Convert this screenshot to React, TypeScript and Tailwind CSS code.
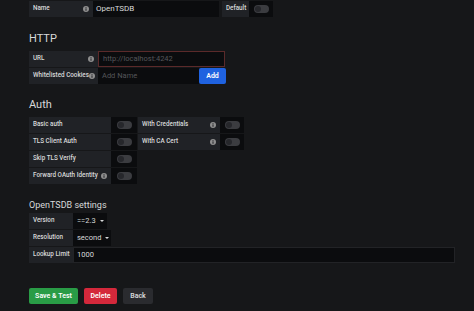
import React from 'react'

function Info() {
  return (
    <svg width="6" height="6" viewBox="0 0 12 12" className="shrink-0">
      <circle cx="6" cy="6" r="6" fill="#8e8e8e" />
      <rect x="5" y="5" width="2" height="4.5" fill="#202226" />
      <rect x="5" y="2.5" width="2" height="1.8" fill="#202226" />
    </svg>
  )
}

function Label({ text, width, info }: { text: string; width: string; info?: boolean }) {
  return (
    <div className={`${width} h-full bg-[#202226] flex items-center justify-between pl-[4px] pr-[4px] text-[6.3px] font-medium text-[#d8d9da] whitespace-nowrap`}>
      <span>{text}</span>
      {info && <Info />}
    </div>
  )
}

function Toggle({ width }: { width: string }) {
  return (
    <div className={`${width} h-full bg-[#0b0c0e] flex items-center justify-center`}>
      <div className="w-[15px] h-[8px] rounded-full bg-[#3b3c40] flex items-center pl-[1px]">
        <div className="w-[6px] h-[6px] rounded-full bg-[#26272b]" />
      </div>
    </div>
  )
}

function Heading({ text, className }: { text: string; className: string }) {
  return <div className={`text-[#d8d9da] ${className}`}>{text}</div>
}

export default function App() {
  return (
    <div className="w-[474px] h-[311px] bg-[#161719] overflow-hidden pl-[29px] pt-[1px] font-['Roboto',sans-serif]">
      {/* Name */}
      <div className="flex h-[16px]">
        <Label text="Name" width="w-[64px]" info />
        <div className="w-[126px] h-full bg-[#0b0c0e] flex items-center pl-[3px] text-[8px] text-[#d8d9da]">OpenTSDB</div>
        <div className="w-[3px]" />
        <Label text="Default" width="w-[27px]" />
        <Toggle width="w-[24px]" />
      </div>

      {/* HTTP */}
      <Heading text="HTTP" className="mt-[15px] mb-[5px] text-[11px] leading-[14px]" />
      <div className="flex flex-col gap-[1px]">
        <div className="flex h-[16px]">
          <Label text="URL" width="w-[69px]" info />
          <div className="w-[127px] h-full bg-[#0b0c0e] border border-[#5b2a2a] flex items-center pl-[4px] text-[7.5px] text-[#55565a]">http://localhost:4242</div>
        </div>
        <div className="flex h-[16px]">
          <Label text="Whitelisted Cookies" width="w-[69px]" info />
          <div className="w-[101px] h-full bg-[#0b0c0e] flex items-center pl-[4px] text-[7.5px] text-[#55565a]">Add Name</div>
          <div className="w-[27px] h-full rounded-[2px] bg-[#1f62e0] flex items-center justify-center text-[7px] font-semibold text-white">Add</div>
        </div>
      </div>

      {/* Auth */}
      <Heading text="Auth" className="mt-[14px] mb-[5px] text-[11px] leading-[14px]" />
      <div className="flex flex-col gap-[1px]">
        <div className="flex h-[16px]">
          <Label text="Basic auth" width="w-[82px]" />
          <Toggle width="w-[26px]" />
          <div className="w-[1px]" />
          <Label text="With Credentials" width="w-[82px]" info />
          <Toggle width="w-[24px]" />
        </div>
        <div className="flex h-[16px]">
          <Label text="TLS Client Auth" width="w-[82px]" />
          <Toggle width="w-[26px]" />
          <div className="w-[1px]" />
          <Label text="With CA Cert" width="w-[82px]" info />
          <Toggle width="w-[24px]" />
        </div>
        <div className="flex h-[16px]">
          <Label text="Skip TLS Verify" width="w-[82px]" />
          <Toggle width="w-[26px]" />
        </div>
        <div className="flex h-[16px]">
          <Label text="Forward OAuth Identity" width="w-[82px]" info />
          <Toggle width="w-[26px]" />
        </div>
      </div>

      {/* OpenTSDB settings */}
      <Heading text="OpenTSDB settings" className="mt-[15px] mb-[2px] text-[9px] leading-[12px]" />
      <div className="flex flex-col gap-[1px]">
        <div className="flex h-[16px]">
          <Label text="Version" width="w-[44px]" />
          <div className="w-[34px] h-full bg-[#0b0c0e] flex items-center pl-[4px] gap-[4px] text-[7.5px] text-[#d8d9da]">
            <span>==2.3</span>
            <span className="w-0 h-0 border-l-[2px] border-r-[2px] border-t-[2px] border-l-transparent border-r-transparent border-t-[#d8d9da]" />
          </div>
        </div>
        <div className="flex h-[16px]">
          <Label text="Resolution" width="w-[44px]" />
          <div className="w-[38px] h-full bg-[#0b0c0e] flex items-center pl-[4px] gap-[4px] text-[7.5px] text-[#d8d9da]">
            <span>second</span>
            <span className="w-0 h-0 border-l-[2px] border-r-[2px] border-t-[2px] border-l-transparent border-r-transparent border-t-[#d8d9da]" />
          </div>
        </div>
        <div className="flex h-[16px]">
          <Label text="Lookup Limit" width="w-[44px]" />
          <div className="w-[382px] h-full bg-[#0b0c0e] border border-[#222326] flex items-center pl-[3px] text-[7.5px] text-[#d8d9da]">1000</div>
        </div>
      </div>

      {/* Buttons */}
      <div className="flex gap-[6px] mt-[25px] h-[16px]">
        <div className="w-[49px] h-full rounded-[2px] bg-[#299c46] flex items-center justify-center text-[7px] font-semibold text-white">Save &amp; Test</div>
        <div className="w-[33px] h-full rounded-[2px] bg-[#d4283b] flex items-center justify-center text-[7px] font-semibold text-white">Delete</div>
        <div className="w-[30px] h-full rounded-[2px] bg-[#2a2b2f] flex items-center justify-center text-[7px] font-semibold text-[#d8d9da]">Back</div>
      </div>
    </div>
  )
}
